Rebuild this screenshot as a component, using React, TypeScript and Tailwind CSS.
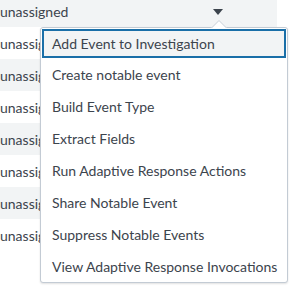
import React from "react";

const rows = Array.from({ length: 8 }, (_, i) => i);

const items = [
  "Add Event to Investigation",
  "Create notable event",
  "Build Event Type",
  "Extract Fields",
  "Run Adaptive Response Actions",
  "Share Notable Event",
  "Suppress Notable Events",
  "View Adaptive Response Invocations",
];

export default function App() {
  return (
    <div
      className="relative w-[294px] h-[298px] overflow-hidden bg-white text-[#3c444d] text-[14px]"
      style={{ fontFamily: "Lato, 'Open Sans', sans-serif" }}
    >
      <div className="w-[277px] -mt-[5px]">
        {rows.map((i) => (
          <div
            key={i}
            className={`h-[32px] flex items-center ${i % 2 === 0 ? "bg-[#f2f4f5]" : "bg-white"}`}
          >
            {i === 0 ? (
              <>
                <span>unassigned</span>
                <svg width="10" height="6" viewBox="0 0 10 6" className="ml-auto mr-[54px] mt-[2px]">
                  <path d="M0 0 L10 0 L5 6 Z" fill="#3c444d" />
                </svg>
              </>
            ) : (
              <div className="w-[40px] overflow-hidden whitespace-nowrap">unassigned</div>
            )}
          </div>
        ))}
      </div>

      {/* dropdown menu */}
      <div className="absolute left-[40px] top-[27px] w-[248px] bg-white border border-[#c3cbd4] rounded-[3px] shadow-[0_1px_2px_rgba(0,0,0,0.12)]">
        <svg
          width="16"
          height="8"
          viewBox="0 0 16 8"
          className="absolute left-[170px] -top-[8px]"
        >
          <path d="M0 8 L8 0 L16 8 Z" fill="#ffffff" />
          <path d="M0.5 8 L8 0.5 L15.5 8" fill="none" stroke="#c3cbd4" />
        </svg>
        {items.map((t, i) =>
          i === 0 ? (
            <div
              key={t}
              className="h-[29px] mt-[1px] mx-[1px] flex items-center pl-[8px] whitespace-nowrap bg-[#f2f4f5] border-2 border-[#1a6fa8]"
            >
              {t}
            </div>
          ) : (
            <div key={t} className="h-[32px] flex items-center pl-[11px] whitespace-nowrap">
              {t}
            </div>
          )
        )}
      </div>
    </div>
  );
}
